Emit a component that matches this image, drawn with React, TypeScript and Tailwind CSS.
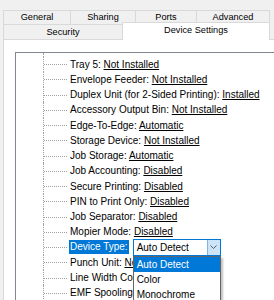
import React from 'react';

type Row = { label: string; value?: string };

const rows: Row[] = [
  { label: 'Tray 5:', value: 'Not Installed' },
  { label: 'Envelope Feeder:', value: 'Not Installed' },
  { label: 'Duplex Unit (for 2-Sided Printing):', value: 'Installed' },
  { label: 'Accessory Output Bin:', value: 'Not Installed' },
  { label: 'Edge-To-Edge:', value: 'Automatic' },
  { label: 'Storage Device:', value: 'Not Installed' },
  { label: 'Job Storage:', value: 'Automatic' },
  { label: 'Job Accounting:', value: 'Disabled' },
  { label: 'Secure Printing:', value: 'Disabled' },
  { label: 'PIN to Print Only:', value: 'Disabled' },
  { label: 'Job Separator:', value: 'Disabled' },
  { label: 'Mopier Mode:', value: 'Disabled' },
  { label: 'Device Type:' },
  { label: 'Punch Unit:', value: 'Not Installed' },
  { label: 'Line Width Correction:', value: 'Off' },
  { label: 'EMF Spooling:', value: 'Disabled' },
];

const Connector: React.FC = (): React.ReactElement => (
  <div className="relative w-[25px] h-full shrink-0 border-l border-dotted border-[#a0a0a0]">
    <div className="absolute left-0 right-[1px] top-1/2 border-t border-dotted border-[#a0a0a0]" />
  </div>
);

const DeviceTypeCombo: React.FC = (): React.ReactElement => (
  <div className="relative ml-[4px] w-[88px] h-[17px] shrink-0">
    <div className="flex h-full border border-[#0078d7] bg-white">
      <span className="flex-1 pl-[3px] leading-[15px]">Auto Detect</span>
      <span className="flex w-[13px] items-center justify-center bg-[#cce4f7] border-l border-[#7eb4ea]">
        <svg width="7" height="4" viewBox="0 0 7 4" fill="none">
          <path d="M0.5 0.5 L3.5 3.5 L6.5 0.5" stroke="#606060" strokeWidth="1" />
        </svg>
      </span>
    </div>
    <div className="absolute left-0 top-[17px] z-20 w-[88px] border border-[#646464] bg-white shadow-[2px_2px_2px_rgba(0,0,0,0.25)]">
      <div className="h-[15px] bg-[#0078d7] pl-[3px] leading-[15px] text-white">Auto Detect</div>
      <div className="h-[15px] pl-[3px] leading-[15px]">Color</div>
      <div className="h-[15px] pl-[3px] leading-[15px]">Monochrome</div>
    </div>
  </div>
);

const App: React.FC = (): React.ReactElement => {
  return (
    <div className="relative w-[274px] h-[300px] overflow-hidden bg-[#f0f0f0] text-[10px] text-black font-['Liberation_Sans',Arial,sans-serif]">
      <div className="h-[10px]" />
      {/* tab rows */}
      <div className="ml-[3px] w-[267px] text-[9.2px]">
        <div className="flex h-[14px] leading-[12px]">
          <div className="w-[67px] border-l border-t border-[#d9d9d9] text-center">General</div>
          <div className="w-[65px] border-l border-t border-[#d9d9d9] text-center">Sharing</div>
          <div className="w-[61px] border-l border-t border-[#d9d9d9] text-center">Ports</div>
          <div className="w-[74px] border-l border-t border-r border-[#d9d9d9] text-center">Advanced</div>
        </div>
        <div className="flex h-[15px] items-end">
          <div className="w-[119px] h-[15px] border-l border-t border-[#d9d9d9] text-center leading-[14px]">Security</div>
          <div className="relative z-10 w-[148px] h-[18px] -mb-[1px] border-l border-t border-r border-[#d9d9d9] bg-white text-center leading-[14px]">
            Device Settings
          </div>
        </div>
      </div>
      {/* panel */}
      <div className="ml-[3px] h-[262px] border-l border-t border-[#d9d9d9] bg-white pl-[11px] pt-[12px]">
        <div className="w-[300px] h-[260px] border-l border-t border-[#828790] bg-white">
          <div className="ml-[27px] h-[3.5px] border-l border-dotted border-[#a0a0a0]" />
          {rows.map((r) => (
            <div key={r.label} className="flex h-[15.25px] items-center whitespace-nowrap">
              <div className="w-[27px] shrink-0" />
              <Connector />
              {r.value !== undefined ? (
                <span className="pl-[2px] leading-[15px]">
                  {r.label} <span className="underline">{r.value}</span>
                </span>
              ) : (
                <>
                  <span className="ml-[1px] bg-[#0078d7] px-[1px] leading-[14px] text-white">{r.label}</span>
                  <DeviceTypeCombo />
                </>
              )}
            </div>
          ))}
        </div>
      </div>
    </div>
  );
};

export default App;
